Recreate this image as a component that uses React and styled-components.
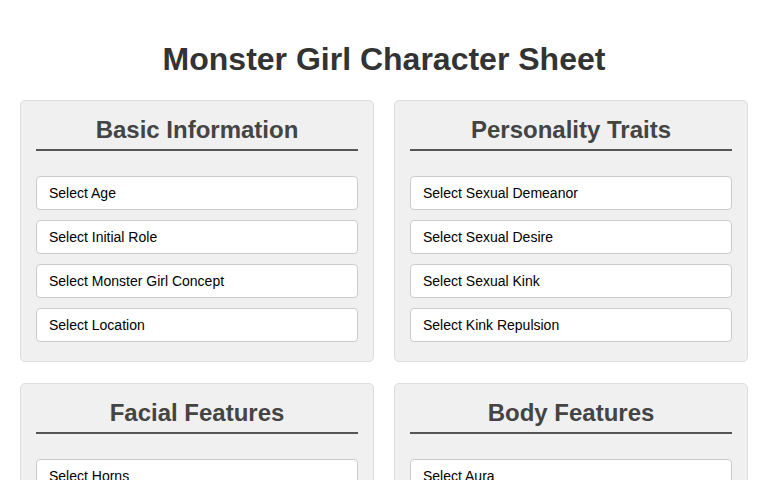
import React from "react";
import styled, { createGlobalStyle } from "styled-components";

const Global = createGlobalStyle`
  html, body { margin: 0; padding: 0; background: #fff; }
  body { font-family: "Liberation Sans", Arial, sans-serif; }
`;

const Page = styled.div`
  padding: 20px;
`;

const Title = styled.h1`
  margin: 21px 0 22px;
  font-size: 32px;
  line-height: 37px;
  font-weight: bold;
  color: #333;
  text-align: center;
`;

const Grid = styled.div`
  display: grid;
  grid-template-columns: 1fr 1fr;
  gap: 21px 20px;
`;

const Card = styled.section`
  background: #f0f0f0;
  border: 1px solid #ddd;
  border-radius: 5px;
  padding: 15px 15px 19px;
  display: flex;
  flex-direction: column;
`;

const CardTitle = styled.h2`
  margin: 0 0 25px;
  padding-bottom: 5px;
  border-bottom: 2px solid #555;
  font-size: 24px;
  line-height: 28px;
  font-weight: bold;
  color: #444;
  text-align: center;
`;

const List = styled.div`
  display: flex;
  flex-direction: column;
  gap: 10px;
`;

const Select = styled.select`
  appearance: none;
  -webkit-appearance: none;
  box-sizing: border-box;
  width: 100%;
  height: 34px;
  padding: 0 12px;
  border: 1px solid #ccc;
  border-radius: 4px;
  background: #fff;
  color: #000;
  font-family: "Liberation Sans", Arial, sans-serif;
  font-size: 14px;
  outline: none;
`;

const sections = [
  { title: "Basic Information", items: ["Select Age", "Select Initial Role", "Select Monster Girl Concept", "Select Location"] },
  { title: "Personality Traits", items: ["Select Sexual Demeanor", "Select Sexual Desire", "Select Sexual Kink", "Select Kink Repulsion"] },
  { title: "Facial Features", items: ["Select Horns", "Select Ears", "Select Eyes", "Select Hair"] },
  { title: "Body Features", items: ["Select Aura", "Select Skin", "Select Wings", "Select Tail"] },
];

export default function App() {
  return (
    <>
      <Global />
      <Page>
        <Title>Monster Girl Character Sheet</Title>
        <Grid>
          {sections.map((s) => (
            <Card key={s.title}>
              <CardTitle>{s.title}</CardTitle>
              <List>
                {s.items.map((it) => (
                  <Select key={it} defaultValue="">
                    <option value="">{it}</option>
                  </Select>
                ))}
              </List>
            </Card>
          ))}
        </Grid>
      </Page>
    </>
  );
}
